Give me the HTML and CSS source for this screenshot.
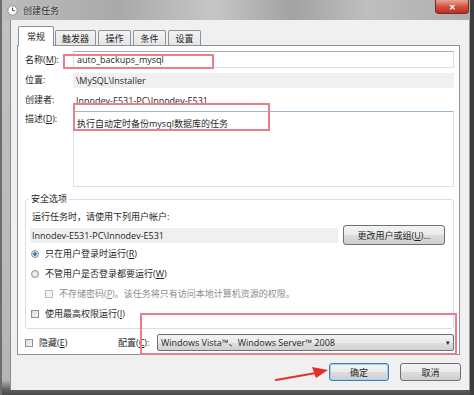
FILE: index.html
```html
<!DOCTYPE html>
<html lang="zh-CN">
  <head>
    <meta charset="UTF-8" />
    <title>创建任务</title>
    <link rel="stylesheet" href="styles.css">
  </head>
  <body>
    <div class="window">
      <div class="titlebar">
        <svg class="clock" width="11" height="11" viewBox="0 0 11 11">
          <circle cx="5.5" cy="5.5" r="4.7" fill="#fdfdfd" stroke="#8a8f96" stroke-width="1" />
          <path d="M5.5 2.6 V5.6 H7.8" fill="none" stroke="#4a4f56" stroke-width="1" />
        </svg>
        <span class="title">创建任务</span>
        <div class="close">&#10005;</div>
      </div>

      <div class="client">
        <div class="tabs">
          <div class="tab active">常规</div>
          <div class="tab">触发器</div>
          <div class="tab">操作</div>
          <div class="tab">条件</div>
          <div class="tab">设置</div>
        </div>

        <div class="panel">
          <div class="form">
            <label class="label">名称(<u>M</u>):</label>
            <div class="field input">auto_backups_mysql</div>

            <label class="label row-gap">位置:</label>
            <div class="field readonly row-gap">\MySQL\Installer</div>

            <label class="label row-gap">创建者:</label>
            <div class="field plain row-gap">Innodev-E531-PC\Innodev-E531</div>

            <label class="label top row-gap3">描述(<u>D</u>):</label>
            <div class="field textarea row-gap3">执行自动定时备份mysql数据库的任务</div>
          </div>

          <div class="group">
            <span class="group-title">安全选项</span>
            <p class="hint">运行任务时，请使用下列用户帐户:</p>
            <div class="account">
              <div class="account-name">Innodev-E531-PC\Innodev-E531</div>
              <div class="btn wide">更改用户或组(<u>U</u>)...</div>
            </div>
            <div class="option first">
              <span class="radio checked"></span>只在用户登录时运行(<u>R</u>)
            </div>
            <div class="option">
              <span class="radio"></span>不管用户是否登录都要运行(<u>W</u>)
            </div>
            <div class="option indent disabled">
              <span class="check"></span>不存储密码(<u>P</u>)。该任务将只有访问本地计算机资源的权限。
            </div>
            <div class="option">
              <span class="check"></span>使用最高权限运行(<u>I</u>)
            </div>
          </div>

          <div class="bottom-row">
            <div class="option hidden-opt">
              <span class="check"></span>隐藏(<u>E</u>)
            </div>
            <span class="config-label">配置(<u>C</u>):</span>
            <div class="select">
              <span>Windows Vista™、Windows Server™ 2008</span>
              <span class="caret">&#9662;</span>
            </div>
          </div>
        </div>

        <div class="buttons">
          <div class="btn default">确定</div>
          <div class="btn">取消</div>
        </div>
      </div>

      <div class="mark mark-name"></div>
      <div class="mark mark-desc"></div>
      <div class="mark mark-config"></div>
      <svg class="arrow" width="60" height="20" viewBox="0 0 60 20">
        <path d="M2 15 L42 8" stroke="#e3302c" stroke-width="2.2" stroke-linecap="round" />
        <path d="M54 5 L38 2 L42 13 Z" fill="#e3302c" />
      </svg>
    </div>
  </body>
</html>
```

FILE: styles.css
```css
* {
  margin: 0;
  padding: 0;
  box-sizing: border-box;
}

body {
  width: 474px;
  height: 395px;
  overflow: hidden;
  font-family: "Open Sans", "Noto Sans CJK SC", sans-serif;
  font-size: 9px;
  color: #1f1f1f;
}

u {
  text-decoration: underline;
}

.window {
  position: relative;
  width: 474px;
  height: 395px;
  display: flex;
  flex-direction: column;
  border-left: 2px solid #6d6d6d;
  border-right: 4px solid #3d3d3d;
  background: linear-gradient(to bottom, #c2c2c2 0, #b6b6b6 380px, #5c5c5c 390px, #4a4a4a 395px);
}

.titlebar {
  height: 20px;
  display: flex;
  align-items: center;
  padding-left: 5px;
  background: linear-gradient(90deg, #bcbcbc, #a9a9a9 25%, #c6c6c6 45%, #a2a2a2 62%, #bfbfbf 78%, #adadad);
}

.clock {
  margin-right: 5px;
}

.title {
  font-size: 9px;
  color: #2a2a2a;
  text-shadow: 0 0 3px #e8e8e8;
}

.close {
  margin-left: auto;
  margin-right: 1px;
  align-self: flex-start;
  width: 34px;
  height: 14px;
  border: 1px solid #7a2a22;
  border-top: none;
  border-radius: 0 0 4px 4px;
  background: linear-gradient(to bottom, #e9a595, #d0533f 50%, #b9301f);
  color: #fff;
  font-size: 8px;
  font-weight: bold;
  display: flex;
  align-items: center;
  justify-content: center;
}

.client {
  flex: 1;
  margin: 0 0 5px 8px;
  border-left: 1px solid #8c8c8c;
  border-right: 1px solid #9a9a9a;
  background-color: #f0f0f0;
  padding: 6px 9px 0 6px;
  display: flex;
  flex-direction: column;
}

.tabs {
  height: 20px;
  display: flex;
  align-items: flex-end;
  padding-left: 1px;
}

.tab {
  height: 16px;
  padding: 0 6px;
  margin-right: 2px;
  border: 1px solid #8d9199;
  border-bottom: none;
  border-radius: 2px 2px 0 0;
  background: linear-gradient(to bottom, #f3f3f3, #e4e4e4);
  display: flex;
  align-items: center;
  justify-content: center;
  min-width: 33px;
}

.tab.active {
  position: relative;
  z-index: 1;
  height: 20px;
  background: #fff;
  min-width: 36px;
  margin-right: 1px;
}

.panel {
  margin-top: -1px;
  height: 310px;
  background-color: #fff;
  border: 1px solid #8d9199;
  padding: 5px 5px 0 7px;
  display: flex;
  flex-direction: column;
}

.form {
  display: grid;
  grid-template-columns: 48px 1fr;
  align-items: center;
}

.label {
  line-height: 16px;
}

.label.top {
  align-self: start;
}

.row-gap {
  margin-top: 4px;
}

.row-gap3 {
  margin-top: 3px;
}

.field {
  padding-left: 3px;
  display: flex;
  align-items: center;
}

.input {
  height: 17px;
  border: 1px solid #dbe0e6;
  border-top-color: #abadb3;
}

.readonly {
  height: 15px;
  background-color: #f0f0f0;
}

.plain {
  height: 16px;
}

.textarea {
  height: 76px;
  align-items: flex-start;
  padding-top: 5px;
  border: 1px solid #dbe0e6;
  border-top-color: #9fb6c8;
}

.group {
  margin-top: 12px;
  height: 130px;
  border: 1px solid #d8dfe4;
  border-radius: 3px;
  display: flex;
  flex-direction: column;
}

.group-title {
  align-self: flex-start;
  margin: -8px 0 0 3px;
  padding: 0 2px;
  line-height: 14px;
  background-color: #fff;
}

.hint {
  margin: 4px 0 0 6px;
  line-height: 14px;
}

.account {
  margin-top: 1px;
  height: 20px;
  display: flex;
  align-items: center;
}

.account-name {
  margin-left: 4px;
  width: 308px;
  height: 15px;
  padding-left: 2px;
  background-color: #f0f0f0;
  display: flex;
  align-items: center;
}

.btn {
  height: 19px;
  border: 1px solid #707070;
  border-radius: 3px;
  background: linear-gradient(to bottom, #f3f3f3 0, #ebebeb 50%, #dddddd 51%, #cfcfcf 100%);
  display: flex;
  align-items: center;
  justify-content: center;
}

.btn.wide {
  margin-left: 5px;
  width: 102px;
  height: 20px;
}

.option {
  display: flex;
  align-items: center;
  line-height: 14px;
  margin-top: 6px;
  padding-left: 5px;
}

.option.first {
  margin-top: 2px;
}

.option.indent {
  padding-left: 19px;
}

.option.disabled {
  color: #8c8c8c;
}

.radio {
  width: 8px;
  height: 8px;
  margin-right: 6px;
  border-radius: 50%;
  border: 1px solid #8e8f8f;
  background: radial-gradient(circle, #f4f4f4, #d9d9d9);
}

.radio.checked {
  background: radial-gradient(circle, #3f8fd6 0, #2a6cb0 35%, #dce3ea 45%, #eef1f4 100%);
}

.check {
  width: 8px;
  height: 8px;
  margin-right: 6px;
  border: 1px solid #8e8f8f;
  background: linear-gradient(135deg, #dcdcdc, #f6f6f6);
}

.disabled .check {
  border-color: #b9b9b9;
  background: #f4f4f4;
}

.bottom-row {
  margin-top: 5px;
  height: 17px;
  display: flex;
  align-items: center;
}

.option.hidden-opt {
  margin-top: 0;
  padding-left: 0;
  width: 93px;
}

.config-label {
  width: 39px;
}

.select {
  flex: 1;
  height: 17px;
  border: 1px solid #707070;
  border-radius: 2px;
  background: linear-gradient(to bottom, #f2f2f2 0, #ebebeb 50%, #dddddd 51%, #d2d2d2 100%);
  display: flex;
  align-items: center;
  padding: 0 3px 0 3px;
}

.caret {
  margin-left: auto;
  font-size: 7px;
  color: #222;
}

.buttons {
  margin-top: 8px;
  margin-right: -1px;
  display: flex;
  justify-content: flex-end;
  gap: 11px;
}

.buttons .btn {
  width: 61px;
  height: 18px;
}

.btn.default {
  width: 60px;
  border-color: #3c7fb1;
  box-shadow: inset 0 0 0 1px #9fd3f4;
}

.mark {
  position: absolute;
  border: 2px solid #e8808b;
}

.mark-name {
  left: 61px;
  top: 54px;
  width: 151px;
  height: 15px;
}

.mark-desc {
  left: 71px;
  top: 103px;
  width: 197px;
  height: 28px;
}

.mark-config {
  left: 138px;
  top: 313px;
  width: 317px;
  height: 42px;
}

.arrow {
  position: absolute;
  left: 272px;
  top: 365px;
}
```
